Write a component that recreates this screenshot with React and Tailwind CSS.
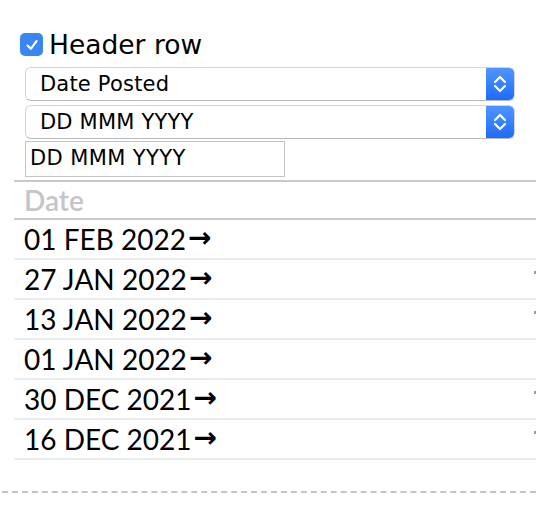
import React from "react";

const rows = [
  { t: "01 FEB 2022", dot: false },
  { t: "27 JAN 2022", dot: true },
  { t: "13 JAN 2022", dot: true },
  { t: "01 JAN 2022", dot: false },
  { t: "30 DEC 2021", dot: true },
  { t: "16 DEC 2021", dot: true },
];

function Chevrons() {
  return (
    <svg width="16" height="22" viewBox="0 0 16 22" fill="none">
      <path d="M3 9 L8 4 L13 9" stroke="white" strokeWidth="2.2" strokeLinecap="round" strokeLinejoin="round" />
      <path d="M3 13 L8 18 L13 13" stroke="white" strokeWidth="2.2" strokeLinecap="round" strokeLinejoin="round" />
    </svg>
  );
}

function Select({ label }) {
  return (
    <div className="flex h-[34px] w-[490px] rounded-[6px] border border-[#d4d4d4] border-b-[#b8b8b8] bg-white overflow-hidden">
      <div className="flex-1 flex items-center pl-[14px] text-[21px] tracking-[0.2px] text-black leading-none">{label}</div>
      <div className="w-[28px] flex items-center justify-center bg-gradient-to-b from-[#4f95ff] to-[#1c6cf9]">
        <Chevrons />
      </div>
    </div>
  );
}

export default function App() {
  return (
    <div className="w-[536px] h-[512px] bg-white overflow-hidden" style={{ fontFamily: '"DejaVu Sans", sans-serif' }}>
      <div className="pt-[32px] pl-[20px] flex items-center h-[57px]">
        <div className="w-[23px] h-[23px] rounded-[5px] bg-[#3a86f7] flex items-center justify-center">
          <svg width="16" height="16" viewBox="0 0 16 16" fill="none">
            <path d="M3.5 8.5 L6.8 11.8 L12.5 4.2" stroke="white" strokeWidth="2.2" strokeLinecap="round" strokeLinejoin="round" />
          </svg>
        </div>
        <span className="ml-[6px] text-[26.5px] leading-[26px] text-black">Header row</span>
      </div>
      <div className="pl-[25px] pt-[10px] flex flex-col gap-[4px]">
        <Select label="Date Posted" />
        <Select label="DD MMM YYYY" />
      </div>
      <div className="pl-[25px] pt-[2px]">
        <div className="w-[260px] h-[36px] border border-[#c4c4c4] flex items-center pl-[4px] text-[21px] tracking-[0.4px] text-black">DD MMM YYYY</div>
      </div>
      <div className="ml-[14px] mt-[3px]" style={{ fontFamily: 'Lato, sans-serif' }}>
        <div className="h-[40px] border-y-2 border-[#c6c9cb] flex items-center pl-[10px] text-[28px] font-semibold text-[#c2c6c9]">Date</div>
        {rows.map((r) => (
          <div key={r.t} className="h-[40px] border-b-2 border-[#e9eded] flex items-center pl-[10px] text-[28px] text-black relative">
            <span>{r.t}</span>
            <span className="text-[28px] font-bold leading-none ml-[2px] mt-[-2px]" style={{ fontFamily: '"DejaVu Sans", sans-serif' }}>→</span>
            {r.dot && <span className="absolute right-0 top-[11px] w-[2px] h-[3px] bg-[#9a9a9a]" />}
          </div>
        ))}
      </div>
      <div className="mt-[31px] ml-[2px] border-t-2 border-dashed border-[#c4c4c4]" />
    </div>
  );
}
